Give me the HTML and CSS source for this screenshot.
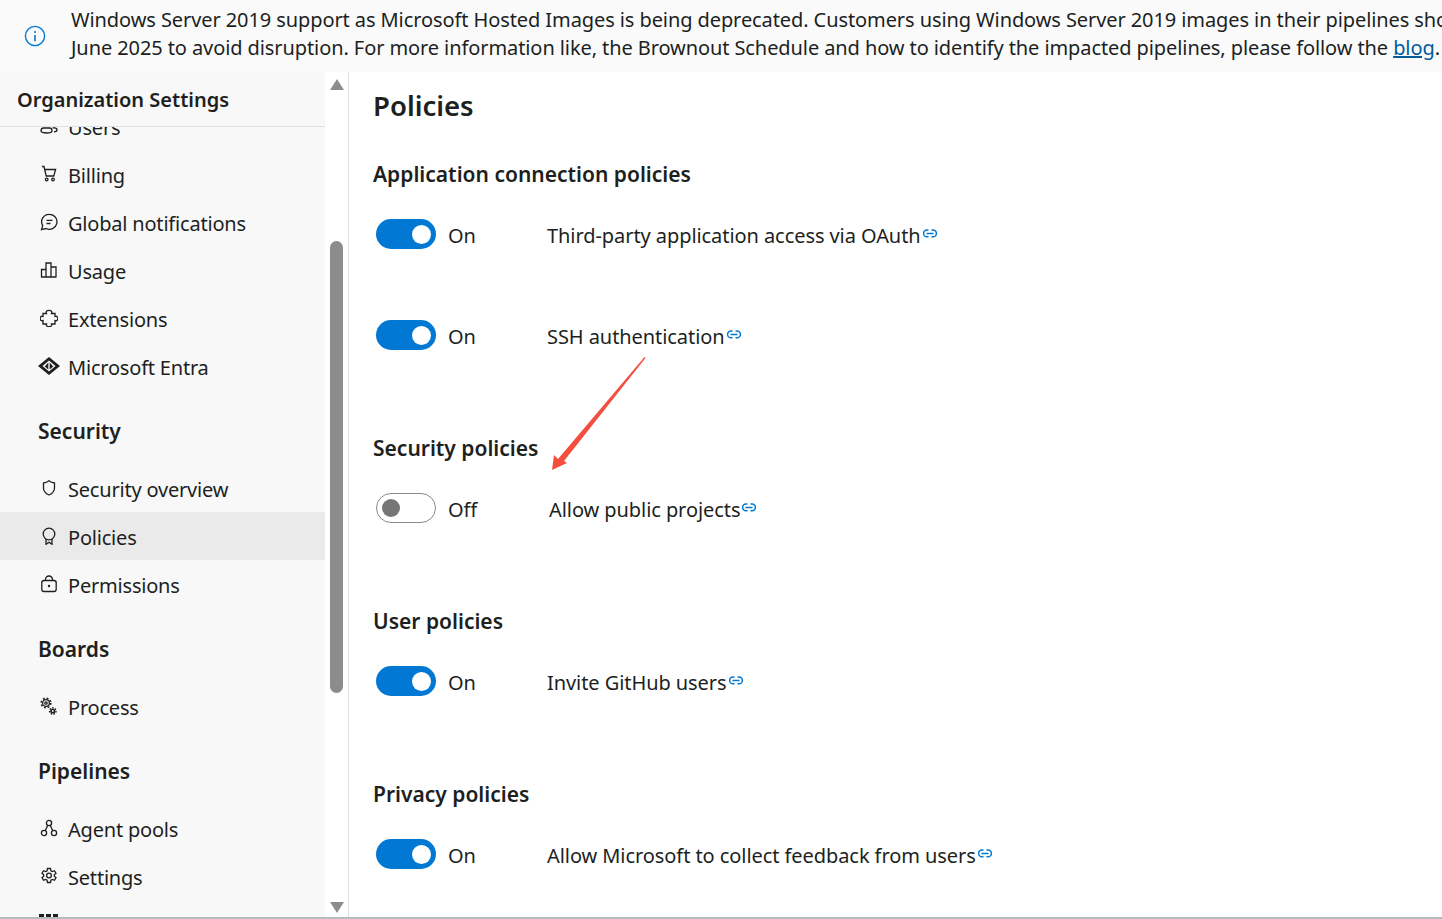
FILE: index.html
```html
<!DOCTYPE html>
<html lang="en">
<head>
    <meta charset="utf-8">
    <title>Policies - Organization Settings</title>
    <link rel="stylesheet" href="styles.css">
</head>
<body>
<div class="page">
    <div class="banner">
        <svg class="banner-icon" viewBox="0 0 22 22" fill="none" stroke="#0078d4" stroke-width="1.4"><circle cx="11" cy="11" r="9.6"/><path d="M11 10v6.2" stroke-width="1.6"/><circle cx="11" cy="6.9" r="1" fill="#0078d4" stroke="none"/></svg>
        <div class="banner-text">
            <p>Windows Server 2019 support as Microsoft Hosted Images is being deprecated. Customers using Windows Server 2019 images in their pipelines should</p>
            <p>June 2025 to avoid disruption. For more information like, the Brownout Schedule and how to identify the impacted pipelines, please follow the <a href="#">blog</a>.</p>
        </div>
    </div>

    <div class="content">
        <aside class="sidebar">
            <h2 class="sidebar-title">Organization Settings</h2>
            <nav class="nav">
                <div class="nav-scroll">
                    <a class="nav-item" href="#">
                        <svg class="nav-icon" viewBox="0 0 18 18"><circle cx="6.500" cy="5" r="3"/><path d="M1 14c0-2 1-3 2.600-3h5.800c1.600 0 2.600 1 2.600 3 0 1.300-2.500 2-5.500 2S1 15.300 1 14z"/><path d="M12.500 10.800h2c1.500 0 2.500.8 2.500 2.200 0 1-1.200 1.600-3 1.800"/></svg>
                        <span>Users</span>
                    </a>
                    <a class="nav-item" href="#">
                        <svg class="nav-icon" viewBox="0 0 18 18"><path d="M2 1.500h2l2.200 9.500h7.600L15.600 4.500H4.600"/><circle cx="6.700" cy="14.500" r="1.300"/><circle cx="13" cy="14.500" r="1.300"/></svg>
                        <span>Billing</span>
                    </a>
                    <a class="nav-item" href="#">
                        <svg class="nav-icon" viewBox="0 0 18 18"><path d="M9.500 1.300a7.500 7.500 0 1 1-3.400 14.200L1.500 16.700l1.200-4.100A7.500 7.500 0 0 1 9.500 1.300z"/><path d="M6.500 7.300h6M6.500 10.500h4"/></svg>
                        <span>Global notifications</span>
                    </a>
                    <a class="nav-item" href="#">
                        <svg class="nav-icon" viewBox="0 0 18 18"><path d="M1.500 16V8.500h4.500V16M6 16V2h5V16M11 16V6h5V16M1 16h15.500"/></svg>
                        <span>Usage</span>
                    </a>
                    <a class="nav-item" href="#">
                        <svg class="nav-icon" viewBox="0 0 18 18"><path d="M6.500 4.500C4.500 .2 13.500 .2 11.500 4.500H15V7.500C18.800 5.800 18.800 13.200 15 11.500V15H11.500C13 18.600 5 18.600 6.500 15H3V11.500C-.8 13.200 -.8 5.800 3 7.500V4.500z"/></svg>
                        <span>Extensions</span>
                    </a>
                    <a class="nav-item" href="#">
                        <svg class="nav-icon nav-icon-entra" viewBox="0 0 22 18"><path class="solid" fill-rule="evenodd" d="M11 0 22 9 11 18 0 9zM11 3.500 4.500 9 11 14.500 17.500 9z"/><path class="solid" d="M10.300 5.500 6.800 9.500 10.300 12.500zM11.700 5.500v7l3.500-3z"/></svg>
                        <span>Microsoft Entra</span>
                    </a>

                    <h3 class="nav-heading">Security</h3>
                    <a class="nav-item" href="#">
                        <svg class="nav-icon" viewBox="0 0 18 18"><path d="M9 1.800c1.500 1.300 3.400 2 5.500 2.200v5c0 3.300-2.200 5.600-5.500 7-3.300-1.400-5.500-3.700-5.500-7V4c2.100-.2 4-.9 5.500-2.200z"/></svg>
                        <span>Security overview</span>
                    </a>
                    <a class="nav-item is-active" href="#">
                        <svg class="nav-icon" viewBox="0 0 18 18"><circle cx="9" cy="7" r="5.800"/><path d="M6 12v5.300l3-2 3 2V12"/></svg>
                        <span>Policies</span>
                    </a>
                    <a class="nav-item" href="#">
                        <svg class="nav-icon" viewBox="0 0 18 18"><rect x="1.800" y="5.500" width="14.400" height="11" rx="2.200"/><path d="M5.500 5.500V4.500a3.500 3.500 0 0 1 7 0v1"/><circle class="solid" cx="9" cy="11" r="1.200"/></svg>
                        <span>Permissions</span>
                    </a>

                    <h3 class="nav-heading">Boards</h3>
                    <a class="nav-item" href="#">
                        <svg class="nav-icon" viewBox="0 0 18 18"><circle cx="6" cy="6" r="3.400"/><circle cx="6" cy="6" r="4.800" stroke-dasharray="1.900 1.870" stroke-width="1.600"/><circle cx="6" cy="6" r="1.200"/><circle class="solid" cx="12.800" cy="14" r="2.600"/><circle cx="12.800" cy="14" r="3.300" stroke-dasharray="1.500 1.390" stroke-width="1.300"/><circle cx="12.800" cy="14" r=".9" fill="#f8f8f8" stroke="none"/></svg>
                        <span>Process</span>
                    </a>

                    <h3 class="nav-heading">Pipelines</h3>
                    <a class="nav-item" href="#">
                        <svg class="nav-icon" viewBox="0 0 18 18"><circle cx="9" cy="4" r="2.600"/><circle cx="4" cy="14" r="2.600"/><circle cx="14" cy="14" r="2.600"/><path d="M7.800 6.300 5.200 11.700M10.200 6.300l2.600 5.400"/></svg>
                        <span>Agent pools</span>
                    </a>
                    <a class="nav-item" href="#">
                        <svg class="nav-icon" viewBox="0 0 18 18"><path d="M7.500 1.500h3l.4 2.200 1.500.8 2.100-.8 1.500 2.600-1.700 1.400v1.600l1.700 1.400-1.500 2.600-2.100-.8-1.500.8-.4 2.200h-3l-.4-2.200-1.500-.8-2.100.8-1.500-2.600 1.700-1.400V7.700L2 6.300l1.500-2.600 2.100.8 1.500-.8z"/><circle cx="9" cy="8.500" r="2.400"/></svg>
                        <span>Settings</span>
                    </a>
                    <a class="nav-item" href="#">
                        <svg class="nav-icon nav-icon-grid" viewBox="0 0 20 18"><path class="solid" d="M0 0h5v5H0zM7 0h5v5H7zM14 0h5v5h-5z"/></svg>
                    </a>
                </div>
            </nav>
        </aside>

        <div class="scrollbar">
            <span class="scroll-arrow scroll-up"></span>
            <span class="scroll-thumb"></span>
            <span class="scroll-arrow scroll-down"></span>
        </div>

        <main class="main">
            <h1 class="page-title">Policies</h1>

            <section class="policy-section">
                <h2 class="section-title">Application connection policies</h2>
                <div class="policy-row">
                    <span class="toggle is-on"></span>
                    <span class="toggle-label">On</span>
                    <span class="policy-name">Third-party application access via OAuth<svg class="link-icon" viewBox="0 0 14 9"><path d="M5.500 1H4a3.400 3.400 0 0 0 0 6.800h1.500M8.500 1H10a3.400 3.400 0 0 1 0 6.800H8.500M3.500 4.400h7"/></svg></span>
                </div>
                <div class="policy-row">
                    <span class="toggle is-on"></span>
                    <span class="toggle-label">On</span>
                    <span class="policy-name">SSH authentication<svg class="link-icon" viewBox="0 0 14 9"><path d="M5.500 1H4a3.400 3.400 0 0 0 0 6.800h1.500M8.500 1H10a3.400 3.400 0 0 1 0 6.800H8.500M3.500 4.400h7"/></svg></span>
                </div>
            </section>

            <section class="policy-section">
                <h2 class="section-title">Security policies</h2>
                <div class="policy-row">
                    <span class="toggle"></span>
                    <span class="toggle-label">Off</span>
                    <span class="policy-name policy-name-off">Allow public projects<svg class="link-icon" viewBox="0 0 14 9"><path d="M5.500 1H4a3.400 3.400 0 0 0 0 6.800h1.500M8.500 1H10a3.400 3.400 0 0 1 0 6.800H8.500M3.500 4.400h7"/></svg></span>
                </div>
            </section>

            <section class="policy-section">
                <h2 class="section-title">User policies</h2>
                <div class="policy-row">
                    <span class="toggle is-on"></span>
                    <span class="toggle-label">On</span>
                    <span class="policy-name">Invite GitHub users<svg class="link-icon" viewBox="0 0 14 9"><path d="M5.500 1H4a3.400 3.400 0 0 0 0 6.800h1.500M8.500 1H10a3.400 3.400 0 0 1 0 6.800H8.500M3.500 4.400h7"/></svg></span>
                </div>
            </section>

            <section class="policy-section">
                <h2 class="section-title">Privacy policies</h2>
                <div class="policy-row">
                    <span class="toggle is-on"></span>
                    <span class="toggle-label">On</span>
                    <span class="policy-name">Allow Microsoft to collect feedback from users<svg class="link-icon" viewBox="0 0 14 9"><path d="M5.500 1H4a3.400 3.400 0 0 0 0 6.800h1.500M8.500 1H10a3.400 3.400 0 0 1 0 6.800H8.500M3.500 4.400h7"/></svg></span>
                </div>
            </section>

            <!-- red annotation drawn over the screenshot -->
            <svg class="annotation" viewBox="0 0 100 120"><polygon points="3,115 5,100 9,104 95.500,2 96.500,3 15,106 18,108"/></svg>
        </main>
    </div>
</div>
</body>
</html>
```

FILE: styles.css
```css
:root {
    --text: #201f1e;
    --blue: #0078d4;
    --link: #005a9e;
    --sidebar: #f8f8f8;
    --active: #eaeaea;
    --line: #e0e0e0;
    --font: "Noto Sans", "Open Sans", sans-serif;
}

* {
    margin: 0;
    padding: 0;
    box-sizing: border-box;
}

body {
    font-family: var(--font);
    color: var(--text);
    background: #fff;
    overflow: hidden;
}

.page {
    height: 919px;
    display: flex;
    flex-direction: column;
    border-bottom: 2px solid #b4bcc0;
    overflow: hidden;
}

.banner {
    height: 72px;
    flex: none;
    display: flex;
    align-items: center;
    background: #fafafa;
    overflow: hidden;
}

.banner-icon {
    width: 22px;
    height: 22px;
    flex: none;
    margin: 0 25px 0 24px;
}

.banner-text {
    padding-bottom: 4px;
    font-size: 20px;
    line-height: 28px;
    letter-spacing: -0.09px;
    white-space: nowrap;
}

.banner-text a {
    color: var(--link);
}

.content {
    flex: 1;
    min-height: 0;
    display: flex;
}

.sidebar {
    width: 325px;
    flex: none;
    display: flex;
    flex-direction: column;
    background: var(--sidebar);
}

.sidebar-title {
    height: 55px;
    flex: none;
    padding: 13px 0 0 17px;
    font-size: 20px;
    line-height: 30px;
    font-weight: 600;
    border-bottom: 1px solid var(--line);
}

.nav {
    flex: 1;
    min-height: 0;
    overflow: hidden;
}

/* list is scrolled, Users is cut off by the title */
.nav-scroll {
    margin-top: -25px;
}

.nav-item {
    height: 48px;
    display: flex;
    align-items: center;
    padding-left: 40px;
    color: var(--text);
    text-decoration: none;
    font-size: 20px;
    letter-spacing: -0.2px;
}

.nav-item span {
    margin-left: 10px;
    padding-top: 2px;
}

.nav-item.is-active {
    background: var(--active);
}

.nav-icon {
    width: 18px;
    height: 18px;
    flex: none;
    fill: none;
    stroke: var(--text);
    stroke-width: 1.3;
}

.nav-icon .solid {
    fill: var(--text);
    stroke: none;
}

.nav-icon-entra {
    width: 22px;
    margin-left: -2px;
    margin-right: -2px;
}

.nav-icon-grid {
    width: 20px;
    margin-left: -1px;
    margin-right: -1px;
    margin-bottom: 2px;
}

.nav-heading {
    height: 74px;
    padding: 27px 0 0 38px;
    font-size: 21px;
    line-height: 28px;
    font-weight: 600;
}

.scrollbar {
    width: 24px;
    flex: none;
    display: flex;
    flex-direction: column;
    align-items: center;
    padding: 7px 0 4px;
    border-right: 1px solid var(--line);
}

.scroll-arrow {
    width: 0;
    height: 0;
    border-left: 7.5px solid transparent;
    border-right: 7.5px solid transparent;
}

.scroll-up {
    border-bottom: 11px solid #8c8c8c;
}

.scroll-down {
    margin-top: auto;
    border-top: 11px solid #8c8c8c;
}

.scroll-thumb {
    width: 13px;
    height: 452px;
    margin-top: 151px;
    border-radius: 7px;
    background: #8c8c8c;
}

.main {
    flex: 1;
    position: relative;
    padding: 14px 0 0 24px;
}

.page-title {
    height: 40px;
    margin-bottom: 33px;
    font-size: 27.5px;
    line-height: 40px;
    font-weight: 600;
}

.policy-section {
    margin-bottom: 12px;
}

.section-title {
    height: 30px;
    margin-bottom: 30px;
    font-size: 21px;
    line-height: 30px;
    font-weight: 600;
}

.policy-row {
    height: 101px;
    display: flex;
    align-items: flex-start;
    padding-left: 3px;
    font-size: 20px;
    line-height: 30px;
}

.toggle {
    width: 60px;
    height: 30px;
    flex: none;
    display: flex;
    align-items: center;
    padding: 0 5px;
    border: 1px solid #8a8886;
    border-radius: 15px;
    background: #fff;
}

.toggle::after {
    content: "";
    width: 18px;
    height: 18px;
    border-radius: 50%;
    background: #767676;
}

.toggle.is-on {
    justify-content: flex-end;
    border: 0;
    background: var(--blue);
}

.toggle.is-on::after {
    width: 19px;
    height: 19px;
    background: #fff;
}

.toggle-label {
    width: 99px;
    flex: none;
    margin-left: 12px;
    padding-top: 2px;
}

.policy-name {
    display: flex;
    align-items: flex-start;
    padding-top: 2px;
    letter-spacing: -0.07px;
}

.policy-name-off {
    margin-left: 2px;
}

.link-icon {
    width: 14px;
    height: 9px;
    flex: none;
    margin: 8px 0 0 2px;
    fill: none;
    stroke: var(--blue);
    stroke-width: 1.5;
}

.annotation {
    position: absolute;
    left: 200px;
    top: 283px;
    width: 100px;
    height: 120px;
    fill: #f44e3f;
}
```
